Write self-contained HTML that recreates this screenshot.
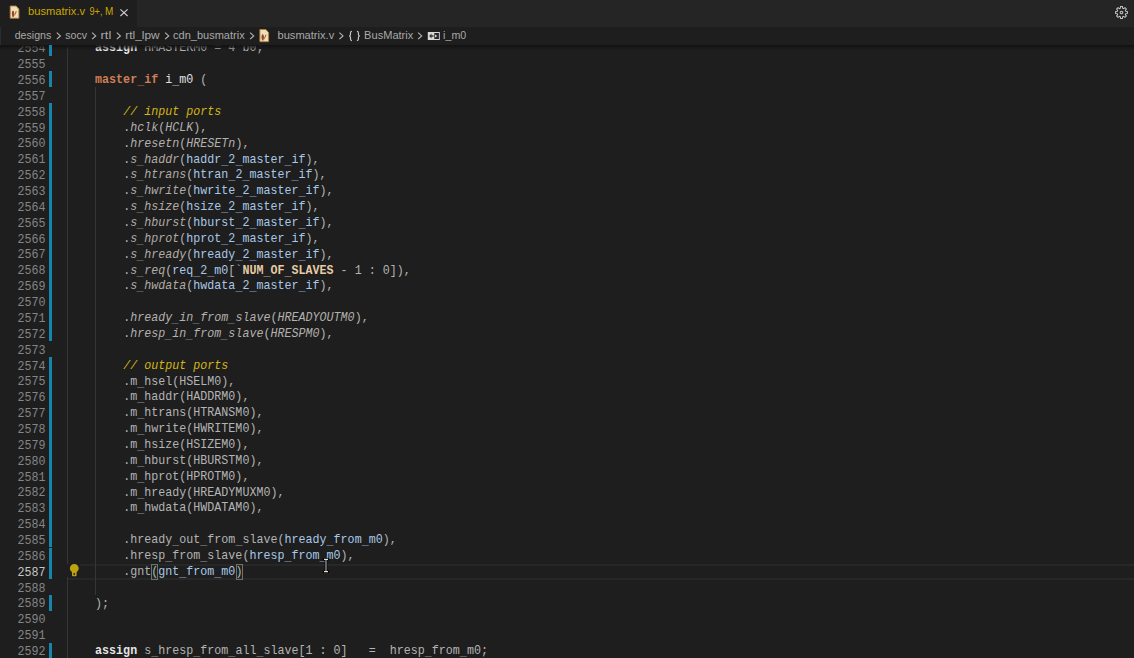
<!DOCTYPE html>
<html><head><meta charset="utf-8"><title>busmatrix.v</title>
<style>
html,body{margin:0;padding:0;}
body{width:1134px;height:658px;overflow:hidden;background:#1e1e1e;position:relative;font-family:"Liberation Sans",sans-serif;}
.editor{position:absolute;left:0;top:45px;width:1134px;height:613px;overflow:hidden;}
.editor>div{margin-top:-45px;}
.ln{position:absolute;left:0;width:45.5px;text-align:right;font-family:"Liberation Mono",monospace;font-size:11.67px;line-height:15.86px;height:15.86px;color:#858585;padding-top:1.8px;transform-origin:0 12.8px;transform:scaleY(1.13);letter-spacing:0.02px;}
.ln.cur{color:#c6c6c6;}
.cl{position:absolute;left:67px;white-space:pre;font-family:"Liberation Mono",monospace;font-size:11.67px;line-height:15.86px;height:15.86px;color:#b4b4b4;padding-top:1.8px;transform-origin:0 12.8px;transform:scaleY(1.13);letter-spacing:0.02px;}
.gb{position:absolute;left:49px;width:3px;background:#1585ab;z-index:5;}
.ig{position:absolute;width:1px;background:#363636;}
.curl{position:absolute;left:67px;width:1067px;height:2px;background:#272727;}
.k{color:#e6e6e6;font-weight:bold;}
.mod{color:#ce7f55;font-weight:bold;}
.inst{color:#e0e0e0;}
.c{color:#d4b614;font-style:italic;}
.p{color:#b2aba4;font-style:italic;}
.pi{color:#b4b0ac;font-style:italic;}
.a{color:#a9c8e8;}
.g{color:#b4b4b4;}
.mac{color:#e6cca6;font-weight:bold;}
.bm{position:relative;}
.bx{position:absolute;width:7px;height:16px;box-sizing:border-box;border:1px solid #707070;background:rgba(0,100,0,0.1);}
.u{font-style:inherit;position:relative;top:1px;opacity:0.65;}
.tabs{position:absolute;left:0;top:0;width:1134px;height:27px;background:#252526;}
.tab{position:absolute;left:0;top:0;width:137px;height:27px;background:#1e1e1e;}
.tablabel{position:absolute;left:28px;top:5px;font-size:11px;line-height:16px;color:#c9a52a;white-space:pre;}
.bc{position:absolute;left:0;top:27px;width:1134px;height:18px;background:#1e1e1e;}
.bci{position:absolute;top:1px;font-size:10.8px;line-height:16px;color:#a9a9a9;white-space:pre;}
.shadow{position:absolute;left:0;top:45px;width:1134px;height:5px;background:linear-gradient(#111111,rgba(30,30,30,0));}
.top{position:absolute;left:0;top:0;}

</style></head><body>
<div class="editor">
<div class="curl" style="top:564px"></div><div class="curl" style="top:578px"></div><div class="bx" style="left:151px;top:564px"></div><div class="bx" style="left:236px;top:564px"></div>
<div class="ig" style="left:67px;top:45px;height:613px"></div><div class="ig" style="left:95px;top:87.32px;height:507.90px"></div>
<div class="gb" style="top:39.71px;height:15.87px"></div><div class="gb" style="top:71.45px;height:15.87px"></div><div class="gb" style="top:103.19px;height:238.08px"></div><div class="gb" style="top:357.15px;height:189.46px"></div><div class="gb" style="top:547.61px;height:31.74px"></div><div class="gb" style="top:595.23px;height:15.87px"></div><div class="gb" style="top:642.84px;height:15.87px"></div>
<div class="ln" style="top:40.28px">2554</div>
<div class="cl" style="top:39.48px">    <span class="k">assign</span><span class="g"> HMASTERM0 = 4'b0;</span></div>
<div class="ln" style="top:56.14px">2555</div>
<div class="cl" style="top:55.34px"></div>
<div class="ln" style="top:72.00px">2556</div>
<div class="cl" style="top:71.20px">    <span class="mod">master<i class="u">_</i>if</span> <span class="inst">i<i class="u">_</i>m0</span><span class="g"> (</span></div>
<div class="ln" style="top:87.86px">2557</div>
<div class="cl" style="top:87.06px"></div>
<div class="ln" style="top:103.72px">2558</div>
<div class="cl" style="top:102.92px">        <span class="c">// input ports</span></div>
<div class="ln" style="top:119.58px">2559</div>
<div class="cl" style="top:118.78px">        <span class="g">.</span><span class="pi">hclk</span><span class="g">(</span><span class="pi">HCLK</span><span class="g">),</span></div>
<div class="ln" style="top:135.44px">2560</div>
<div class="cl" style="top:134.64px">        <span class="g">.</span><span class="pi">hresetn</span><span class="g">(</span><span class="pi">HRESETn</span><span class="g">),</span></div>
<div class="ln" style="top:151.31px">2561</div>
<div class="cl" style="top:150.50px">        <span class="g">.</span><span class="p">s<i class="u">_</i>haddr</span><span class="g">(</span><span class="a">haddr<i class="u">_</i>2<i class="u">_</i>master<i class="u">_</i>if</span><span class="g">),</span></div>
<div class="ln" style="top:167.17px">2562</div>
<div class="cl" style="top:166.37px">        <span class="g">.</span><span class="p">s<i class="u">_</i>htrans</span><span class="g">(</span><span class="a">htran<i class="u">_</i>2<i class="u">_</i>master<i class="u">_</i>if</span><span class="g">),</span></div>
<div class="ln" style="top:183.03px">2563</div>
<div class="cl" style="top:182.23px">        <span class="g">.</span><span class="p">s<i class="u">_</i>hwrite</span><span class="g">(</span><span class="a">hwrite<i class="u">_</i>2<i class="u">_</i>master<i class="u">_</i>if</span><span class="g">),</span></div>
<div class="ln" style="top:198.89px">2564</div>
<div class="cl" style="top:198.09px">        <span class="g">.</span><span class="p">s<i class="u">_</i>hsize</span><span class="g">(</span><span class="a">hsize<i class="u">_</i>2<i class="u">_</i>master<i class="u">_</i>if</span><span class="g">),</span></div>
<div class="ln" style="top:214.75px">2565</div>
<div class="cl" style="top:213.95px">        <span class="g">.</span><span class="p">s<i class="u">_</i>hburst</span><span class="g">(</span><span class="a">hburst<i class="u">_</i>2<i class="u">_</i>master<i class="u">_</i>if</span><span class="g">),</span></div>
<div class="ln" style="top:230.61px">2566</div>
<div class="cl" style="top:229.81px">        <span class="g">.</span><span class="p">s<i class="u">_</i>hprot</span><span class="g">(</span><span class="a">hprot<i class="u">_</i>2<i class="u">_</i>master<i class="u">_</i>if</span><span class="g">),</span></div>
<div class="ln" style="top:246.47px">2567</div>
<div class="cl" style="top:245.67px">        <span class="g">.</span><span class="p">s<i class="u">_</i>hready</span><span class="g">(</span><span class="a">hready<i class="u">_</i>2<i class="u">_</i>master<i class="u">_</i>if</span><span class="g">),</span></div>
<div class="ln" style="top:262.33px">2568</div>
<div class="cl" style="top:261.53px">        <span class="g">.</span><span class="p">s<i class="u">_</i>req</span><span class="g">(</span><span class="a">req<i class="u">_</i>2<i class="u">_</i>m0</span><span class="g">[`</span><span class="mac">NUM<i class="u">_</i>OF<i class="u">_</i>SLAVES</span><span class="g"> - 1 : 0]),</span></div>
<div class="ln" style="top:278.19px">2569</div>
<div class="cl" style="top:277.39px">        <span class="g">.</span><span class="p">s<i class="u">_</i>hwdata</span><span class="g">(</span><span class="a">hwdata<i class="u">_</i>2<i class="u">_</i>master<i class="u">_</i>if</span><span class="g">),</span></div>
<div class="ln" style="top:294.05px">2570</div>
<div class="cl" style="top:293.25px"></div>
<div class="ln" style="top:309.92px">2571</div>
<div class="cl" style="top:309.12px">        <span class="g">.</span><span class="pi">hready<i class="u">_</i>in<i class="u">_</i>from<i class="u">_</i>slave</span><span class="g">(</span><span class="pi">HREADYOUTM0</span><span class="g">),</span></div>
<div class="ln" style="top:325.78px">2572</div>
<div class="cl" style="top:324.98px">        <span class="g">.</span><span class="pi">hresp<i class="u">_</i>in<i class="u">_</i>from<i class="u">_</i>slave</span><span class="g">(</span><span class="pi">HRESPM0</span><span class="g">),</span></div>
<div class="ln" style="top:341.64px">2573</div>
<div class="cl" style="top:340.84px"></div>
<div class="ln" style="top:357.50px">2574</div>
<div class="cl" style="top:356.70px">        <span class="c">// output ports</span></div>
<div class="ln" style="top:373.36px">2575</div>
<div class="cl" style="top:372.56px">        <span class="g">.m<i class="u">_</i>hsel(HSELM0),</span></div>
<div class="ln" style="top:389.22px">2576</div>
<div class="cl" style="top:388.42px">        <span class="g">.m<i class="u">_</i>haddr(HADDRM0),</span></div>
<div class="ln" style="top:405.08px">2577</div>
<div class="cl" style="top:404.28px">        <span class="g">.m<i class="u">_</i>htrans(HTRANSM0),</span></div>
<div class="ln" style="top:420.94px">2578</div>
<div class="cl" style="top:420.14px">        <span class="g">.m<i class="u">_</i>hwrite(HWRITEM0),</span></div>
<div class="ln" style="top:436.80px">2579</div>
<div class="cl" style="top:436.00px">        <span class="g">.m<i class="u">_</i>hsize(HSIZEM0),</span></div>
<div class="ln" style="top:452.66px">2580</div>
<div class="cl" style="top:451.86px">        <span class="g">.m<i class="u">_</i>hburst(HBURSTM0),</span></div>
<div class="ln" style="top:468.53px">2581</div>
<div class="cl" style="top:467.73px">        <span class="g">.m<i class="u">_</i>hprot(HPROTM0),</span></div>
<div class="ln" style="top:484.39px">2582</div>
<div class="cl" style="top:483.59px">        <span class="g">.m<i class="u">_</i>hready(HREADYMUXM0),</span></div>
<div class="ln" style="top:500.25px">2583</div>
<div class="cl" style="top:499.45px">        <span class="g">.m<i class="u">_</i>hwdata(HWDATAM0),</span></div>
<div class="ln" style="top:516.11px">2584</div>
<div class="cl" style="top:515.31px"></div>
<div class="ln" style="top:531.97px">2585</div>
<div class="cl" style="top:531.17px">        <span class="g">.hready<i class="u">_</i>out<i class="u">_</i>from<i class="u">_</i>slave</span><span class="g">(</span><span class="a">hready<i class="u">_</i>from<i class="u">_</i>m0</span><span class="g">),</span></div>
<div class="ln" style="top:547.83px">2586</div>
<div class="cl" style="top:547.03px">        <span class="g">.hresp<i class="u">_</i>from<i class="u">_</i>slave</span><span class="g">(</span><span class="a">hresp<i class="u">_</i>from<i class="u">_</i>m0</span><span class="g">),</span></div>
<div class="ln cur" style="top:563.69px">2587</div>
<div class="cl" style="top:562.89px">        <span class="g">.gnt</span><span class="g">(</span><span class="a">gnt<i class="u">_</i>from<i class="u">_</i>m0</span><span class="g">)</span></div>
<div class="ln" style="top:579.55px">2588</div>
<div class="cl" style="top:578.75px"></div>
<div class="ln" style="top:595.41px">2589</div>
<div class="cl" style="top:594.61px">    <span class="g">);</span></div>
<div class="ln" style="top:611.27px">2590</div>
<div class="cl" style="top:610.47px"></div>
<div class="ln" style="top:627.13px">2591</div>
<div class="cl" style="top:626.34px"></div>
<div class="ln" style="top:643.00px">2592</div>
<div class="cl" style="top:642.20px">    <span class="k">assign</span><span class="g"> s<i class="u">_</i>hresp<i class="u">_</i>from<i class="u">_</i>all<i class="u">_</i>slave[1 : 0]   =  hresp<i class="u">_</i>from<i class="u">_</i>m0;</span></div>
</div>
<div class="tabs">
 <div class="tab"></div>
</div>
<div class="bc"></div>
<div class="shadow"></div>
<div style="position:absolute;left:0;top:27px;width:1px;height:18px;background:#2c2c2c"></div>
<svg class="top" width="1134" height="45" viewBox="0 0 1134 45">
 <!-- tab file icon -->
 <g>
  <path d="M10.2 6h5.9l2.8 3.2v9h-8.7z" fill="#ebdfbc" stroke="#b87a38" stroke-width="0.9"/>
  <path d="M16.1 6.2l2.6 2.9" fill="none" stroke="#c9a23a" stroke-width="0.8"/>
  <path d="M12.1 11.3c.3-.8 1.4-.8 1.7 0l.6 2.5-.6 2.7c-.3.7-1.2.7-1.5 0l-.5-2.7z" fill="#9c4622"/><path d="M15.8 10.9l1 .5-2 4.4-.6-.6z" fill="#a85a30"/>
 </g>
 <text x="28" y="15.1" textLength="57.1" lengthAdjust="spacingAndGlyphs" font-family="Liberation Sans" font-size="11.1" fill="#cca700">busmatrix.v</text>
 <text x="89.5" y="15.1" textLength="13" lengthAdjust="spacingAndGlyphs" font-family="Liberation Sans" font-size="10" fill="#cca700">9+,</text>
 <text x="105" y="15.1" textLength="8.3" lengthAdjust="spacingAndGlyphs" font-family="Liberation Sans" font-size="10" fill="#cca700">M</text>
 <path d="M120.4 9.4l7.2 6.6M127.6 9.4l-7.2 6.6" stroke="#c8c8c8" stroke-width="1.2" fill="none"/>
 <!-- gear -->
 <g transform="translate(1121.5 12.5)" fill="none" stroke="#c5c5c5" stroke-width="1.05">
  <path d="M4.21 -1.29 L5.93 -0.94 L5.93 0.94 L4.21 1.29 L3.88 2.07 L4.85 3.53 L3.53 4.85 L2.07 3.88 L1.29 4.21 L0.94 5.93 L-0.94 5.93 L-1.29 4.21 L-2.07 3.88 L-3.53 4.85 L-4.85 3.53 L-3.88 2.07 L-4.21 1.29 L-5.93 0.94 L-5.93 -0.94 L-4.21 -1.29 L-3.88 -2.07 L-4.85 -3.53 L-3.53 -4.85 L-2.07 -3.88 L-1.29 -4.21 L-0.94 -5.93 L0.94 -5.93 L1.29 -4.21 L2.07 -3.88 L3.53 -4.85 L4.85 -3.53 L3.88 -2.07Z"/>
  <circle r="1.3"/>
 </g>
 <!-- breadcrumbs -->
 <g font-family="Liberation Sans" font-size="11.1" fill="#a9a9a9">
  <text x="14.7" y="39.1" textLength="36.6" lengthAdjust="spacingAndGlyphs">designs</text>
  <text x="65.3" y="39.1" textLength="21.7" lengthAdjust="spacingAndGlyphs">socv</text>
  <text x="100.5" y="39.1" textLength="10.8" lengthAdjust="spacingAndGlyphs">rtl</text>
  <text x="125.3" y="39.1" textLength="34.4" lengthAdjust="spacingAndGlyphs">rtl_lpw</text>
  <text x="173" y="39.1" textLength="71.7" lengthAdjust="spacingAndGlyphs">cdn_busmatrix</text>
  <text x="277.5" y="39.1" textLength="56.7" lengthAdjust="spacingAndGlyphs">busmatrix.v</text>
  <text x="364.1" y="39.1" textLength="49.2" lengthAdjust="spacingAndGlyphs">BusMatrix</text>
  <text x="443.1" y="39.1" textLength="23.1" lengthAdjust="spacingAndGlyphs">i_m0</text>
 </g>
 <g fill="none" stroke="#b4b4b4" stroke-width="1.15">
  <path d="M56.8 32.6l3.6 3.3-3.6 3.3"/>
  <path d="M92.1 32.6l3.6 3.3-3.6 3.3"/>
  <path d="M116.8 32.6l3.6 3.3-3.6 3.3"/>
  <path d="M165.1 32.6l3.6 3.3-3.6 3.3"/>
  <path d="M250.1 32.6l3.6 3.3-3.6 3.3"/>
  <path d="M339.4 32.6l3.6 3.3-3.6 3.3"/>
  <path d="M418.1 32.6l3.6 3.3-3.6 3.3"/>
 </g>
 <!-- breadcrumb file icon -->
 <g transform="translate(249.7 23.5)">
  <path d="M10.2 6h5.9l2.8 3.2v9h-8.7z" fill="#ebdfbc" stroke="#b87a38" stroke-width="0.9"/>
  <path d="M16.1 6.2l2.6 2.9" fill="none" stroke="#c9a23a" stroke-width="0.8"/>
  <path d="M12.1 11.3c.3-.8 1.4-.8 1.7 0l.6 2.5-.6 2.7c-.3.7-1.2.7-1.5 0l-.5-2.7z" fill="#9c4622"/><path d="M15.8 10.9l1 .5-2 4.4-.6-.6z" fill="#a85a30"/>
 </g>
 <!-- braces -->
 <g fill="none" stroke="#cacaca" stroke-width="1.15">
  <path d="M352 31.2c-1.2 0-1.5.5-1.5 1.5v1.6c0 .9-.4 1.5-1.3 1.6.9.1 1.3.7 1.3 1.6v1.6c0 1 .3 1.5 1.5 1.5"/>
  <path d="M356.9 31.2c1.2 0 1.5.5 1.5 1.5v1.6c0 .9.4 1.5 1.3 1.6-.9.1-1.3.7-1.3 1.6v1.6c0 1-.3 1.5-1.5 1.5"/>
 </g>
 <!-- field icon -->
 <g>
  <rect x="427.8" y="32" width="12" height="8" fill="#d8d8d8"/>
  <path d="M429.2 36l2.3-2.4v1.6h2v1.6h-2v1.6z" fill="#333"/>
  <rect x="434.3" y="33" width="4.6" height="6" fill="#262626"/>
  <path d="M435 34.4l2.4 1.6-2.4 1.6z" fill="#d0d0d0"/>
 </g>
</svg>
<div style="position:absolute;left:67px;top:564px;width:13px;height:13px;background:#1e1e1e"></div>
<svg style="position:absolute;left:68px;top:562px" width="13" height="16" viewBox="0 0 13 16">
 <path d="M6.3 1.9c-2.45 0-4.4 1.95-4.4 4.35 0 1.35.6 2.5 1.55 3.3.35.3.55.7.55 1.15v2.6c0 .5.4.9.9.9h2.8c.5 0 .9-.4.9-.9v-2.6c0-.45.2-.85.55-1.15.95-.8 1.55-1.95 1.55-3.3 0-2.4-1.95-4.35-4.4-4.35z" fill="#bda311"/>
 <ellipse cx="6.3" cy="12.1" rx="0.9" ry="1.1" fill="#2a2400"/>
</svg>
<svg style="position:absolute;left:321px;top:557px" width="10" height="17" viewBox="0 0 10 17">
 <path d="M3 2.3h4M5 2.3v12.4M3 14.7h4" stroke="#000" stroke-width="2.6" fill="none" stroke-linecap="round"/>
 <path d="M3 2.3h4M3 14.7h4" stroke="#e8e2d0" stroke-width="1.3" fill="none"/>
 <path d="M5 3v11" stroke="#8a8f8f" stroke-width="1.4" fill="none"/>
</svg>

</body></html>
